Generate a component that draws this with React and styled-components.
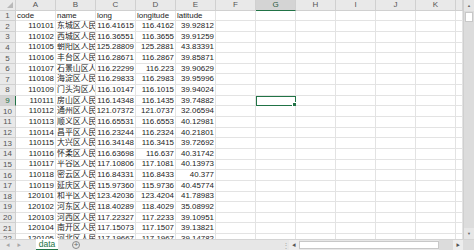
import React from "react";
import styled, { createGlobalStyle } from "styled-components";

const GlobalStyle = createGlobalStyle`
  html, body {
    margin: 0;
    padding: 0;
    overflow: hidden;
    background: #ffffff;
  }
`;

const COLUMNS = ["A", "B", "C", "D", "E", "F", "G", "H", "I", "J", "K", ""];
const SELECTED_COL = 6;
const SELECTED_ROW = 9;

const rows = [
  ["110101", "东城区人民政府", "116.41615", "116.4162", "39.92812"],
  ["110102", "西城区人民政府", "116.36551", "116.3655", "39.91259"],
  ["110105", "朝阳区人民政府", "125.28809", "125.2881", "43.83391"],
  ["110106", "丰台区人民政府", "116.28671", "116.2867", "39.85871"],
  ["110107", "石景山区人民政府", "116.22299", "116.223", "39.90629"],
  ["110108", "海淀区人民政府", "116.29833", "116.2983", "39.95996"],
  ["110109", "门头沟区人民政府", "116.10147", "116.1015", "39.94024"],
  ["110111", "房山区人民政府", "116.14348", "116.1435", "39.74882"],
  ["110112", "通州区人民政府", "121.07372", "121.0737", "32.06594"],
  ["110113", "顺义区人民政府", "116.65531", "116.6553", "40.12981"],
  ["110114", "昌平区人民政府", "116.23244", "116.2324", "40.21801"],
  ["110115", "大兴区人民政府", "116.34148", "116.3415", "39.72692"],
  ["110116", "怀柔区人民政府", "116.63698", "116.637", "40.31742"],
  ["110117", "平谷区人民政府", "117.10806", "117.1081", "40.13973"],
  ["110118", "密云区人民政府", "116.84331", "116.8433", "40.377"],
  ["110119", "延庆区人民政府", "115.97360", "115.9736", "40.45774"],
  ["120101", "和平区人民政府", "123.42036", "123.4204", "41.78983"],
  ["120102", "河东区人民政府", "118.40289", "118.4029", "35.08992"],
  ["120103", "河西区人民政府", "117.22327", "117.2233", "39.10951"],
  ["120104", "南开区人民政府", "117.15073", "117.1507", "39.13821"],
  ["120105", "河北区人民政府", "117.19667", "117.1967", "39.14782"],
];

export default function App() {
  const header = ["code", "name", "long", "longitude", "latitude"];
  const allRows = [header, ...rows];

  return (
    <Window>
      <GlobalStyle />
      <SheetArea>
        <Grid>
          <Corner>
            <CornerMark />
          </Corner>
          {COLUMNS.map((c, i) => (
            <ColHead key={c || "L"} $active={i === SELECTED_COL}>
              {c}
            </ColHead>
          ))}
          {allRows.map((row, r) => {
            const num = r + 1;
            return (
              <React.Fragment key={num}>
                <RowHead $active={num === SELECTED_ROW}>{num}</RowHead>
                {COLUMNS.map((c, ci) => {
                  const value = row[ci];
                  const isText = r === 0 || ci === 1;
                  return (
                    <Cell
                      key={ci}
                      $align={isText ? "left" : "right"}
                      $selected={num === SELECTED_ROW && ci === SELECTED_COL}
                    >
                      {value}
                    </Cell>
                  );
                })}
              </React.Fragment>
            );
          })}
        </Grid>
        <VScroll>
          <ArrowBtn>▲</ArrowBtn>
          <VThumb />
          <VTrack />
          <ArrowBtn>▼</ArrowBtn>
        </VScroll>
      </SheetArea>
      <TabBar>
        <NavArrows>
          <span>◀</span>
          <span>▶</span>
        </NavArrows>
        <SheetTab>data</SheetTab>
        <AddSheet>+</AddSheet>
        <TabSpacer />
        <Grip>⋮</Grip>
        <HArrow>◀</HArrow>
        <HThumb />
        <HTrack />
        <HArrow>▶</HArrow>
        <BarCorner />
      </TabBar>
    </Window>
  );
}

const Window = styled.div`
  width: 474px;
  height: 250px;
  display: flex;
  flex-direction: column;
  overflow: hidden;
  font-family: "Liberation Sans", "Noto Sans CJK SC", sans-serif;
`;

const SheetArea = styled.div`
  display: flex;
  height: 239px;
  overflow: hidden;
`;

const Grid = styled.div`
  flex: 1;
  display: grid;
  grid-template-columns: 16px repeat(11, 40px) 1fr;
  grid-auto-rows: 10.65px;
  overflow: hidden;
`;

const HeadBase = styled.div`
  box-sizing: border-box;
  background: ${(p) => (p.$active ? "#d4d4d4" : "#e9e9e9")};
  color: ${(p) => (p.$active ? "#217346" : "#555555")};
  font-size: 8px;
  display: flex;
  align-items: center;
  justify-content: center;
  border-right: 1px solid #d0d0d0;
  border-bottom: 1px solid #d0d0d0;
`;

const Corner = styled(HeadBase)`
  position: relative;
`;

const CornerMark = styled.div`
  position: absolute;
  right: 2px;
  bottom: 2px;
  width: 0;
  height: 0;
  border-left: 6px solid transparent;
  border-bottom: 6px solid #b8b8b8;
`;

const ColHead = styled(HeadBase)`
  border-bottom: ${(p) => (p.$active ? "1px solid #217346" : "1px solid #d0d0d0")};
  color: ${(p) => (p.$active ? "#2b5a3e" : "#555555")};
`;

const RowHead = styled(HeadBase)`
  border-right: ${(p) => (p.$active ? "1px solid #217346" : "1px solid #d0d0d0")};
`;

const Cell = styled.div`
  position: relative;
  box-sizing: border-box;
  border-right: 1px solid #e3e3e3;
  border-bottom: 1px solid #e3e3e3;
  font-size: 7.9px;
  color: #222222;
  white-space: nowrap;
  overflow: ${(p) => (p.$selected ? "visible" : "hidden")};
  display: flex;
  align-items: center;
  justify-content: ${(p) => (p.$align === "right" ? "flex-end" : "flex-start")};
  padding: 0 1px;
  line-height: 1;

  ${(p) =>
    p.$selected &&
    `
    outline: 1.5px solid #217346;
    outline-offset: -1px;
    &::after {
      content: "";
      position: absolute;
      right: -2px;
      bottom: -2px;
      width: 3px;
      height: 3px;
      background: #217346;
      border: 1px solid #fff;
    }
  `}
`;

const VScroll = styled.div`
  width: 11px;
  display: flex;
  flex-direction: column;
  background: #dcdcdc;
  border-left: 1px solid #cfcfcf;
  box-sizing: border-box;
`;

const ArrowBtn = styled.div`
  height: 11px;
  display: flex;
  align-items: center;
  justify-content: center;
  font-size: 4px;
  color: #666;
  background: #e6e6e6;
`;

const VThumb = styled.div`
  height: 8px;
  margin: 1px 1px;
  background: #ffffff;
  border: 1px solid #c8c8c8;
`;

const VTrack = styled.div`
  flex: 1;
`;

const TabBar = styled.div`
  height: 11px;
  display: flex;
  align-items: stretch;
  background: #e7e7e7;
  border-top: 1px solid #d4d4d4;
  box-sizing: border-box;
  font-size: 8px;
`;

const NavArrows = styled.div`
  width: 36px;
  display: flex;
  align-items: center;
  gap: 7px;
  padding-left: 6px;
  box-sizing: border-box;
  font-size: 4px;
  color: #a8a8a8;
`;

const SheetTab = styled.div`
  width: 22px;
  display: flex;
  align-items: center;
  justify-content: center;
  background: #ffffff;
  color: #217346;
  font-size: 8.5px;
  border-bottom: 1px solid #217346;
  box-sizing: border-box;
  margin-top: -1px;
`;

const AddSheet = styled.div`
  width: 8px;
  height: 8px;
  margin: auto 0 auto 14px;
  border: 1px solid #8a8a8a;
  border-radius: 50%;
  box-sizing: border-box;
  display: flex;
  align-items: center;
  justify-content: center;
  font-size: 8px;
  line-height: 1;
  color: #666;
`;

const TabSpacer = styled.div`
  flex: 1;
`;

const Grip = styled.div`
  width: 7px;
  display: flex;
  align-items: center;
  justify-content: center;
  font-size: 8px;
  color: #aaaaaa;
`;

const HArrow = styled.div`
  width: 10px;
  display: flex;
  align-items: center;
  justify-content: center;
  font-size: 4px;
  color: #555;
  background: #ededed;
`;

const HThumb = styled.div`
  width: 140px;
  margin: 1px 0;
  background: #ffffff;
  border: 1px solid #c8c8c8;
  box-sizing: border-box;
`;

const HTrack = styled.div`
  width: 14px;
  background: #dcdcdc;
`;

const BarCorner = styled.div`
  width: 11px;
  background: #dcdcdc;
`;
